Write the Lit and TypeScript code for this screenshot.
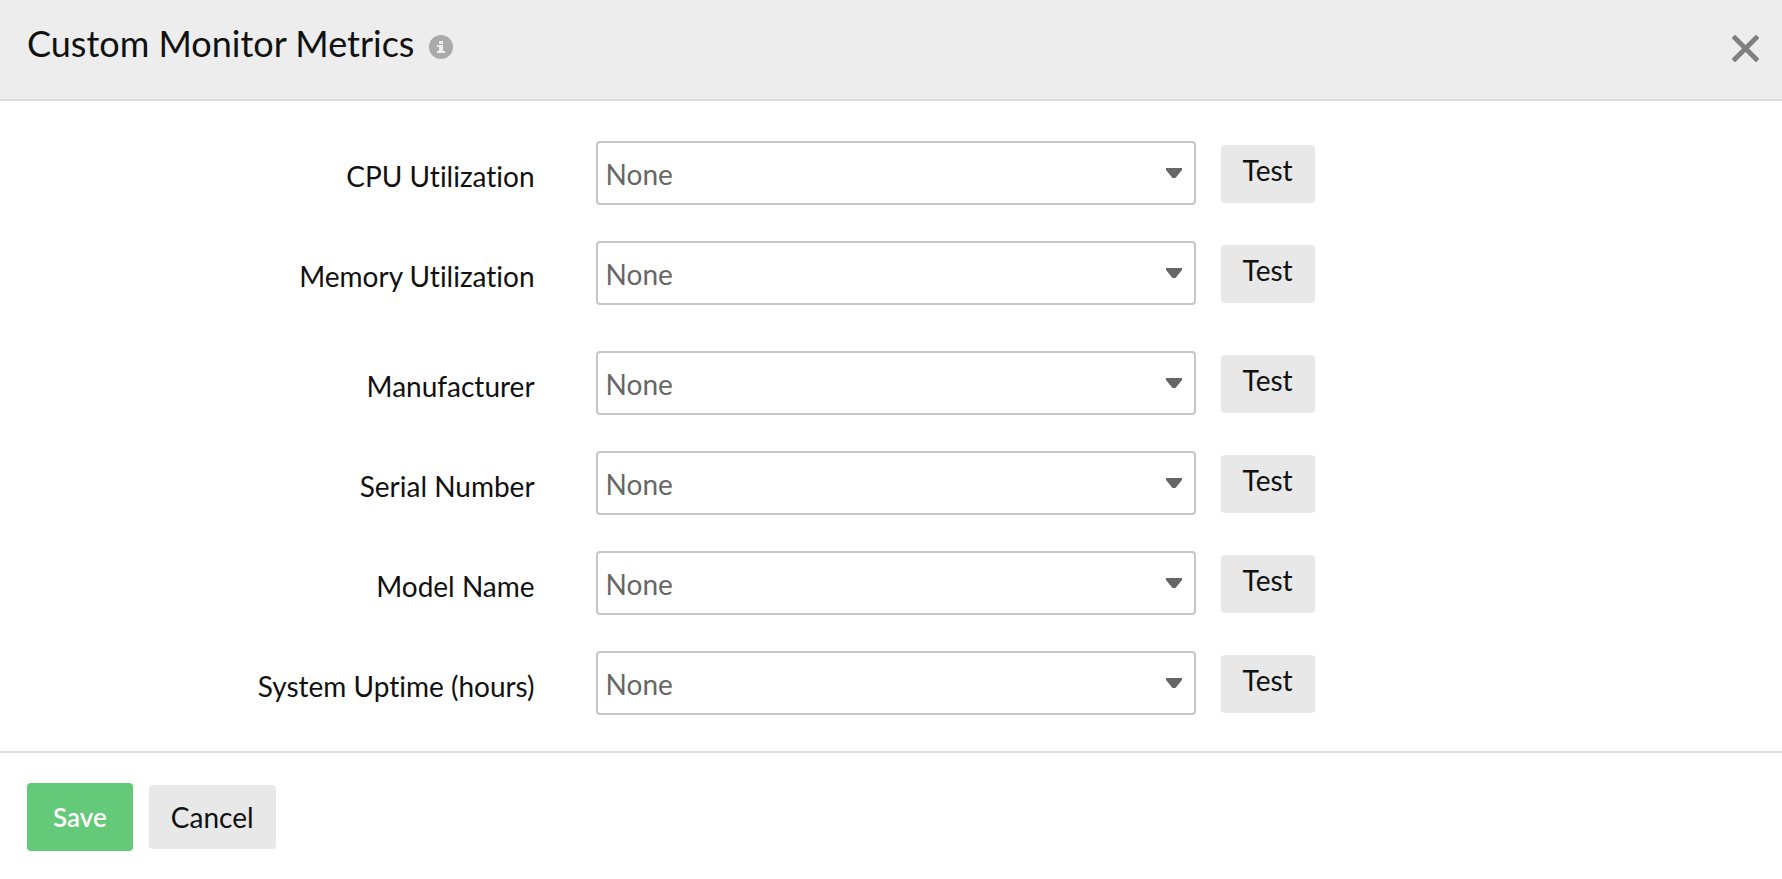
import { LitElement, html, css } from "lit";
import { customElement, property } from "lit/decorators.js";

@customElement("metric-row")
class MetricRow extends LitElement {
  @property() label = "";

  static styles = css`
    :host {
      display: grid;
      grid-template-columns: 30% minmax(0, 661px) auto 1fr;
      align-items: center;
      font-size: 28px;
      line-height: 34px;
    }
    .label {
      padding-top: 6px;
      text-align: right;
    }
    .field {
      display: grid;
      grid-template-columns: minmax(0, 1fr);
      align-items: center;
      padding-left: 61px;
    }
    .select {
      grid-area: 1 / 1;
      box-sizing: border-box;
      width: 100%;
      height: 64px;
      margin: 0;
      padding: 2px 40px 0 8px;
      border: 2px solid #c6c6c6;
      border-radius: 4px;
      background: #fff;
      color: #666;
      font: inherit;
      appearance: none;
    }
    .arrow {
      grid-area: 1 / 1;
      justify-self: end;
      margin-right: 14px;
      pointer-events: none;
    }
    .test {
      height: 58px;
      margin: 2px 0 0 25px;
      padding: 0 22px 8px;
      border: 0;
      border-radius: 4px;
      background: #e8e8e8;
      color: #111;
      font: inherit;
      cursor: pointer;
    }
  `;

  render() {
    return html`
      <label class="label" for="metric">${this.label}</label>
      <div class="field">
        <select class="select" id="metric">
          <option>None</option>
        </select>
        <svg class="arrow" width="16" height="10" viewBox="0 0 16 10" aria-hidden="true">
          <path d="M0 0h16v2L9.500 10h-3L0 2z" fill="#666" />
        </svg>
      </div>
      <button class="test" type="button">Test</button>
    `;
  }
}

@customElement("app-root")
class AppRoot extends LitElement {
  static styles = css`
    :host {
      display: block;
      background: #fff;
      color: #111;
      font-family: Lato, "Open Sans", sans-serif;
      font-variant-ligatures: none;
    }
    .header {
      display: flex;
      align-items: flex-start;
      padding: 21px 23px 34px 27px;
      border-bottom: 2px solid #dcdcdc;
      background: #ededed;
    }
    .title {
      margin: 0;
      font-size: 36px;
      font-weight: 400;
      line-height: 44px;
    }
    .info {
      margin: 14px 0 0 15px;
    }
    .close {
      display: flex;
      margin: 14px 0 0 auto;
      padding: 0;
      border: 0;
      background: none;
      cursor: pointer;
    }
    .form {
      display: grid;
      gap: 46px;
      padding: 40px 0 36px;
    }
    .group {
      display: grid;
      gap: 36px;
    }
    .footer {
      display: flex;
      align-items: center;
      gap: 16px;
      padding: 30px 27px 28px;
      border-top: 2px solid #dcdcdc;
    }
    .button {
      height: 64px;
      padding: 0 22px;
      border: 0;
      border-radius: 4px;
      background: #e8e8e8;
      color: #111;
      font: inherit;
      font-size: 28px;
      line-height: 34px;
      cursor: pointer;
    }
    .save {
      height: 68px;
      padding: 0 26px;
      background: #65c97a;
      color: #fff;
      font-size: 26px;
      font-weight: 600;
    }
  `;

  private groups = [
    ["CPU Utilization", "Memory Utilization"],
    ["Manufacturer", "Serial Number", "Model Name", "System Uptime (hours)"],
  ];

  render() {
    return html`
      <header class="header">
        <h1 class="title">Custom Monitor Metrics</h1>
        <svg class="info" width="24" height="24" viewBox="0 0 24 24" role="img" aria-label="Information">
          <circle cx="12" cy="12" r="12" fill="#aaa" />
          <path d="M10 6h4v3h-4zM8 10h6v6h2v2H8v-2h2v-4H8z" fill="#eee" />
        </svg>
        <button class="close" type="button" aria-label="Close">
          <svg width="27" height="27" viewBox="0 0 27 27" aria-hidden="true">
            <path
              d="M3 1L13.500 11.500L24 1L26 3L15.500 13.500L26 24L24 26L13.500 15.500L3 26L1 24L11.500 13.500L1 3Z"
              fill="#808080"
              stroke="#808080"
              stroke-width="2"
              stroke-linejoin="round"
            />
          </svg>
        </button>
      </header>
      <form class="form">
        ${this.groups.map(
          (labels) => html`<div class="group">
            ${labels.map((label) => html`<metric-row label=${label}></metric-row>`)}
          </div>`
        )}
      </form>
      <footer class="footer">
        <button class="button save" type="button">Save</button>
        <button class="button" type="button">Cancel</button>
      </footer>
    `;
  }
}
